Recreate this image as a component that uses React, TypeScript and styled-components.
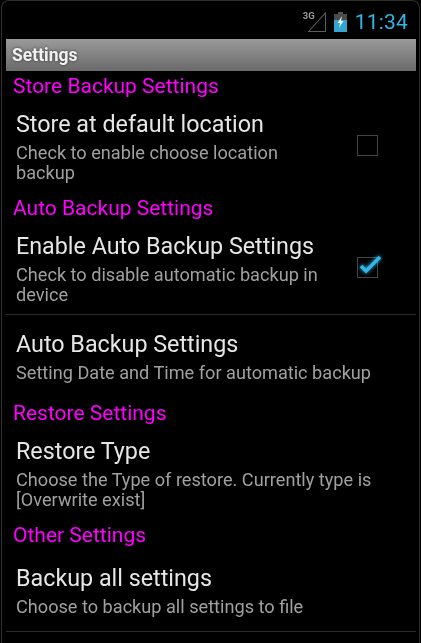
import React from 'react';
import styled, { createGlobalStyle } from 'styled-components';

const GlobalStyle = createGlobalStyle`
  html, body {
    margin: 0;
    background: #000;
  }
  body {
    font-family: Roboto, "Liberation Sans", sans-serif;
  }
`;

interface Pref {
  title: string;
  summary: string;
  check?: 'on' | 'off';
  divider?: boolean;
  height: number;
}

interface Group {
  header: string;
  prefs: Pref[];
}

const groups: Group[] = [
  {
    header: 'Store Backup Settings',
    prefs: [
      {
        title: 'Store at default location',
        summary: 'Check to enable choose location backup',
        check: 'off',
        height: 92,
      },
    ],
  },
  {
    header: 'Auto Backup Settings',
    prefs: [
      {
        title: 'Enable Auto Backup Settings',
        summary: 'Check to disable automatic backup in device',
        check: 'on',
        divider: true,
        height: 92,
      },
      {
        title: 'Auto Backup Settings',
        summary: 'Setting Date and Time for automatic backup',
        height: 83,
      },
    ],
  },
  {
    header: 'Restore Settings',
    prefs: [
      {
        title: 'Restore Type',
        summary: 'Choose the Type of restore. Currently type is [Overwrite exist]',
        height: 92,
      },
    ],
  },
  {
    header: 'Other Settings',
    prefs: [
      {
        title: 'Backup all settings',
        summary: 'Choose to backup all settings to file',
        divider: true,
        height: 82,
      },
    ],
  },
];

export default function App() {
  return (
    <>
      <GlobalStyle />
      <Screen>
        <StatusBar>
          <SignalIcon />
          <BatteryIcon />
          <Clock>11:34</Clock>
        </StatusBar>
        <TitleBar>Settings</TitleBar>
        {groups.map(group => (
          <section key={group.header}>
            <GroupHeader>{group.header}</GroupHeader>
            {group.prefs.map(pref => (
              <PrefRow key={pref.title} $height={pref.height} $divider={pref.divider}>
                <PrefText>
                  <PrefTitle>{pref.title}</PrefTitle>
                  <PrefSummary>{pref.summary}</PrefSummary>
                </PrefText>
                {pref.check && (
                  <CheckSlot>
                    <CheckBox />
                    {pref.check === 'on' && <CheckMark />}
                  </CheckSlot>
                )}
              </PrefRow>
            ))}
          </section>
        ))}
      </Screen>
    </>
  );
}

function SignalIcon() {
  return (
    <SignalWrap>
      <SignalLabel>3G</SignalLabel>
      <svg width="18" height="20" viewBox="0 0 18 20">
        <path d="M0.5 19.5 L17.5 1 V19.5 Z" fill="none" stroke="#5c5c5c" strokeWidth="1.1" />
      </svg>
    </SignalWrap>
  );
}

function BatteryIcon() {
  return (
    <svg width="13" height="20" viewBox="0 0 13 20">
      <rect x="4" y="0" width="5" height="2" fill="#555" />
      <rect x="0" y="2" width="13" height="18" fill="#4a4a4a" />
      <rect x="0" y="8" width="13" height="12" fill="#33a5cf" />
      <path d="M8 4 L3.5 11 H6 L5 16 L9.5 9 H7 Z" fill="#e8f4f8" />
    </svg>
  );
}

function CheckMark() {
  return (
    <CheckSvg width="24" height="22" viewBox="0 0 24 22">
      <path d="M3 12 L8 17 L22 3" fill="none" stroke="#33b5e5" strokeWidth="3.6" />
    </CheckSvg>
  );
}

const Screen = styled.div`
  width: 419px;
  height: 643px;
  margin-left: 1px;
  overflow: hidden;
  background: #000;
  box-sizing: border-box;
  padding: 0 3px 0 4px;
  border: 1px solid #2e2e2e;
  border-bottom: none;
  border-radius: 8px 8px 0 0;
  filter: blur(0.35px);
`;

const StatusBar = styled.div`
  height: 38px;
  display: flex;
  align-items: center;
  justify-content: flex-end;
  gap: 8px;
  padding: 4px 8px 0 0;
  box-sizing: border-box;
`;

const SignalWrap = styled.div`
  position: relative;
  width: 23px;
  height: 20px;
  display: flex;
  align-items: flex-end;
  justify-content: flex-end;
`;

const SignalLabel = styled.span`
  position: absolute;
  top: -1px;
  left: 0;
  color: #9a9a9a;
  font-size: 9.5px;
  font-weight: 700;
  line-height: 10px;
`;

const Clock = styled.span`
  color: #33b5e5;
  font-size: 21px;
  letter-spacing: 0.2px;
`;

const TitleBar = styled.div`
  height: 32px;
  display: flex;
  align-items: center;
  padding-left: 6px;
  box-sizing: border-box;
  background: linear-gradient(#9a9a9a, #6a6a6a);
  color: #f2f2f2;
  font-size: 17.5px;
  font-weight: 700;
  text-shadow: 0 0 3px #333;
`;

const GroupHeader = styled.div`
  height: 30px;
  display: flex;
  align-items: center;
  padding-left: 7px;
  color: #f0f;
  font-size: 21px;
`;

const PrefRow = styled.div<{ $height: number; $divider?: boolean }>`
  height: ${p => p.$height}px;
  box-sizing: border-box;
  display: flex;
  align-items: center;
  padding: 0 0 1px 10px;
  border-bottom: 1px solid ${p => (p.$divider ? '#2a2a2a' : 'transparent')};
`;

const PrefText = styled.div`
  flex: 1;
  min-width: 0;
`;

const PrefTitle = styled.div`
  color: #e6e6e6;
  font-size: 23.3px;
  line-height: 30px;
`;

const PrefSummary = styled.div`
  color: #a0a0a0;
  font-size: 18.15px;
  line-height: 20px;
  margin-top: 4px;
`;

const CheckSlot = styled.div`
  position: relative;
  width: 21px;
  height: 21px;
  margin: 0 38px 2px 23px;
  flex: none;
`;

const CheckBox = styled.div`
  width: 21px;
  height: 21px;
  box-sizing: border-box;
  border: 1px solid #444;
`;

const CheckSvg = styled.svg`
  position: absolute;
  left: 1px;
  top: -3px;
  filter: drop-shadow(0 0 2px #33b5e5);
`;

void React;
